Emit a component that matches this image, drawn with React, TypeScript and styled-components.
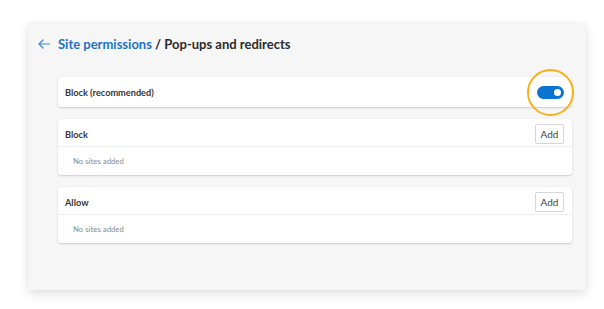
import React from "react";
import styled, { createGlobalStyle } from "styled-components";

const GlobalStyle = createGlobalStyle`
    html, body {
        margin: 0;
        padding: 0;
        background: #ffffff;
        font-family: Lato, "Open Sans", sans-serif;
    }
`;

interface SiteList {
    title: string;
}

const lists: SiteList[] = [{ title: "Block" }, { title: "Allow" }];

const BackArrow: React.FC = () => (
    <svg width="12" height="10" viewBox="0 0 12 10" fill="none">
        <path d="M11.5 5H1M5 1L1 5l4 4" stroke="#3a8ad6" strokeWidth="1.2" strokeLinecap="round" strokeLinejoin="round" />
    </svg>
);

export default function App() {
    return (
        <>
            <GlobalStyle />
            <Page>
                <Panel>
                    <Header>
                        <BackArrow />
                        <Title>
                            <Crumb>Site permissions</Crumb> / Pop-ups and redirects
                        </Title>
                    </Header>
                    <Content>
                        <ToggleCard>
                            <RowLabel>Block (recommended)</RowLabel>
                            <ToggleWrap>
                                <Toggle>
                                    <Knob />
                                </Toggle>
                                <Highlight />
                            </ToggleWrap>
                        </ToggleCard>
                        {lists.map((list) => (
                            <ListCard key={list.title}>
                                <ListHeader>
                                    <RowLabel>{list.title}</RowLabel>
                                    <AddButton>Add</AddButton>
                                </ListHeader>
                                <ListBody>No sites added</ListBody>
                            </ListCard>
                        ))}
                    </Content>
                </Panel>
            </Page>
        </>
    );
}

const Page = styled.div`
    width: 604px;
    height: 309px;
    padding-top: 23px;
    padding-left: 28px;
    box-sizing: border-box;
`;

const Panel = styled.div`
    width: 558px;
    height: 267px;
    background: #f6f6f6;
    box-shadow: 0 4px 10px rgba(0, 0, 0, 0.12), 0 0 2px rgba(0, 0, 0, 0.06);
    box-sizing: border-box;
    padding: 12px 14px 0 10px;
`;

const Header = styled.div`
    display: flex;
    align-items: center;
    gap: 8px;
    height: 18px;
`;

const Title = styled.div`
    font-size: 13px;
    font-weight: 700;
    color: #2b2b2b;
    white-space: nowrap;
`;

const Crumb = styled.span`
    color: #1b74c5;
`;

const Content = styled.div`
    margin-top: 24px;
    margin-left: 20px;
    display: flex;
    flex-direction: column;
    gap: 12px;
`;

const Card = styled.div`
    background: #ffffff;
    border-radius: 3px;
    box-shadow: 0 1px 2px rgba(0, 0, 0, 0.16), 0 0 1px rgba(0, 0, 0, 0.08);
`;

const ToggleCard = styled(Card)`
    height: 30px;
    display: flex;
    align-items: center;
    justify-content: space-between;
    padding: 0 8px 0 7px;
`;

const RowLabel = styled.span`
    font-size: 9.2px;
    font-weight: 700;
    color: #363636;
    padding-top: 1px;
`;

const ToggleWrap = styled.div`
    position: relative;
    display: flex;
`;

const Toggle = styled.div`
    width: 27px;
    height: 13px;
    border-radius: 7px;
    background: #0a74d0;
    position: relative;
`;

const Knob = styled.div`
    position: absolute;
    right: 3px;
    top: 3px;
    width: 7px;
    height: 7px;
    border-radius: 50%;
    background: #ffffff;
`;

const Highlight = styled.div`
    position: absolute;
    left: 50%;
    top: 50%;
    width: 43px;
    height: 43px;
    margin-left: -23.5px;
    margin-top: -23.5px;
    border: 2px solid #f7b017;
    border-radius: 50%;
    pointer-events: none;
`;

const ListCard = styled(Card)`
    display: flex;
    flex-direction: column;
`;

const ListHeader = styled.div`
    height: 28px;
    box-sizing: border-box;
    display: flex;
    align-items: center;
    justify-content: space-between;
    padding: 2px 8px 0 7px;
    border-bottom: 1px solid #efefef;
`;

const AddButton = styled.button`
    width: 29px;
    height: 20px;
    padding: 0;
    background: #ffffff;
    border: 1px solid #d6d6d6;
    border-radius: 2px;
    font-family: inherit;
    font-size: 10px;
    color: #444444;
`;

const ListBody = styled.div`
    height: 28px;
    display: flex;
    align-items: center;
    padding-left: 15px;
    font-size: 7.8px;
    color: #8a8a8a;
`;
